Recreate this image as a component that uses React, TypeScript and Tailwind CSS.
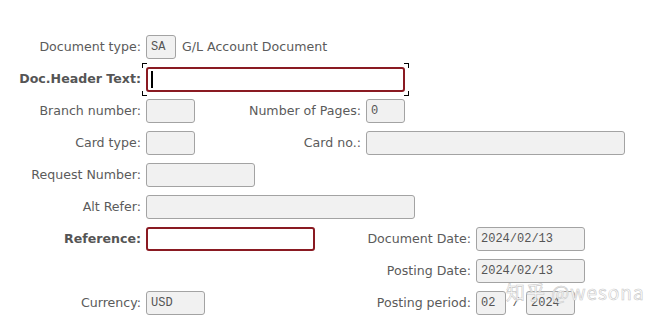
import type { ReactNode } from 'react';

const labelFont = "font-['DejaVu_Sans',sans-serif] text-[12.6px] text-[#5b5b5b]";
const monoFont = "font-['Liberation_Mono',monospace] text-[12px] text-[#555]";

function Label({ children, w, bold }: { children: ReactNode; w: string; bold?: boolean }) {
  return (
    <div className={`${w} shrink-0 text-right pr-[5px] ${labelFont} ${bold ? 'font-bold text-[#555]' : ''}`}>
      {children}
    </div>
  );
}

function Field({ w, value, required }: { w: string; value?: string; required?: boolean }) {
  return (
    <div
      className={`${w} h-[24px] shrink-0 rounded-[3px] flex items-center px-[4px] ${monoFont} ${
        required ? 'border-2 border-[#8a1a22] bg-white' : 'border border-[#a3a3a3] bg-[#f1f1f1]'
      }`}
    >
      {value}
    </div>
  );
}

export default function App() {
  return (
    <div className="w-[658px] h-[321px] bg-white overflow-hidden relative">
      <div className="flex flex-col pt-[31px]">
        {/* Document type */}
        <div className="flex items-center h-[32px]">
          <Label w="w-[146px]">Document type:</Label>
          <Field w="w-[30px]" value="SA" />
          <span className={`ml-[6px] ${labelFont}`}>G/L Account Document</span>
        </div>

        {/* Header text, focused */}
        <div className="flex items-center h-[32px]">
          <Label w="w-[146px]" bold>Doc.Header Text:</Label>
          <div className="relative">
            <div className="w-[259px] h-[25px] rounded-[3px] border-2 border-[#8a1a22] bg-white flex items-center pl-[3px]">
              <div className="w-[2px] h-[17px] bg-black" />
            </div>
            <div className="absolute -left-[4px] -top-[4px] w-[5px] h-[5px] border-l border-t border-black" />
            <div className="absolute -right-[4px] -top-[4px] w-[5px] h-[5px] border-r border-t border-black" />
            <div className="absolute -left-[4px] -bottom-[4px] w-[5px] h-[5px] border-l border-b border-black" />
            <div className="absolute -right-[4px] -bottom-[4px] w-[5px] h-[5px] border-r border-b border-black" />
          </div>
        </div>

        <div className="flex items-center h-[32px]">
          <Label w="w-[146px]">Branch number:</Label>
          <Field w="w-[49px]" />
          <Label w="w-[171px]">Number of Pages:</Label>
          <Field w="w-[39px]" value="0" />
        </div>

        <div className="flex items-center h-[32px]">
          <Label w="w-[146px]">Card type:</Label>
          <Field w="w-[49px]" />
          <Label w="w-[171px]">Card no.:</Label>
          <Field w="w-[259px]" />
        </div>

        <div className="flex items-center h-[32px]">
          <Label w="w-[146px]">Request Number:</Label>
          <Field w="w-[109px]" />
        </div>

        <div className="flex items-center h-[32px]">
          <Label w="w-[146px]">Alt Refer:</Label>
          <Field w="w-[269px]" />
        </div>

        <div className="flex items-center h-[32px]">
          <Label w="w-[146px]" bold>Reference:</Label>
          <Field w="w-[169px]" required />
          <Label w="w-[161px]">Document Date:</Label>
          <Field w="w-[109px]" value="2024/02/13" />
        </div>

        <div className="flex items-center h-[32px]">
          <div className="w-[315px] shrink-0" />
          <Label w="w-[161px]">Posting Date:</Label>
          <Field w="w-[109px]" value="2024/02/13" />
        </div>

        <div className="flex items-center h-[32px]">
          <Label w="w-[146px]">Currency:</Label>
          <Field w="w-[59px]" value="USD" />
          <Label w="w-[271px]">Posting period:</Label>
          <Field w="w-[30px]" value="02" />
          <span className={`w-[20px] text-center ${monoFont}`}>/</span>
          <Field w="w-[49px]" value="2024" />
        </div>
      </div>

      {/* watermark */}
      <div className="absolute left-[506px] top-[278px] font-['Noto_Sans_CJK_SC',sans-serif] text-[19px] text-white [-webkit-text-stroke:0.6px_#c8c8c8] tracking-[1px]">
        知乎 @wesona
      </div>
    </div>
  );
}
